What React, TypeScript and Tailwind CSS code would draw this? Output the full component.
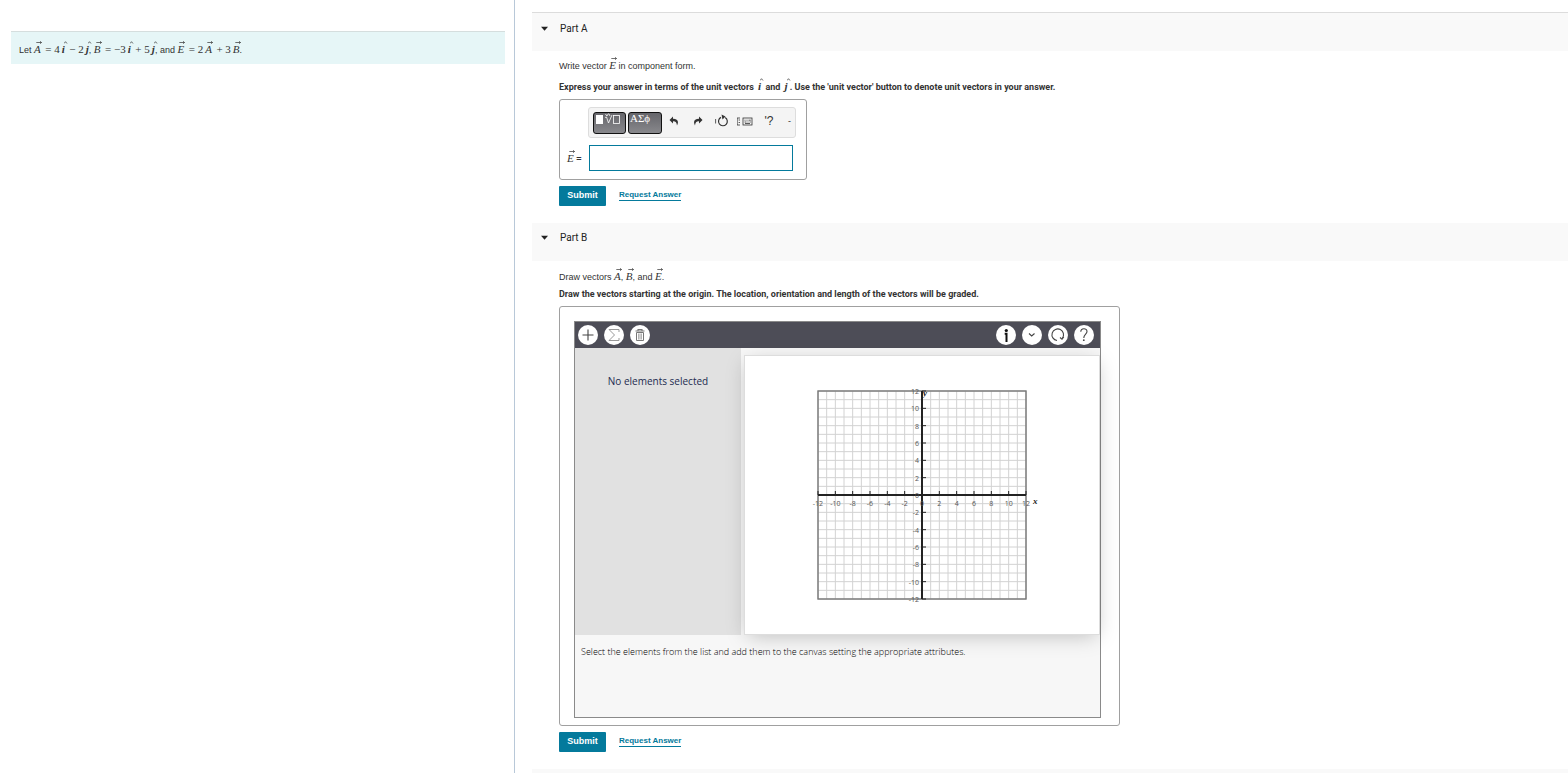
import type { ReactNode } from 'react';

// Math letter with an arrow or a hat over it
function Sym({
  children,
  hat = false,
  bold = false,
  spaced = false,
}: {
  children: ReactNode;
  hat?: boolean;
  bold?: boolean;
  spaced?: boolean;
}) {
  return (
    <span
      className={`relative inline-block font-['Liberation_Serif',serif] text-[11px] leading-[10px] italic ${
        bold ? 'font-bold' : 'font-normal'
      } ${spaced ? 'mx-[2px]' : ''}`}
    >
      {children}
      <svg
        viewBox="0 0 6 3"
        className="absolute -top-[3px] left-[2px] h-[3px] w-[6px]"
        fill="none"
        stroke="currentColor"
        strokeWidth="0.7"
        aria-hidden="true"
      >
        {hat ? <path d="M0 2.5 L1.5 0.7 L3 2.5" /> : <path d="M0.3 1.5 H5.5 M4 0.3 L5.5 1.5 L4 2.7" />}
      </svg>
    </span>
  );
}

function Num({ children }: { children: ReactNode }) {
  return <span className="mx-[2px] font-['Liberation_Serif',serif] text-[11px] leading-[10px]">{children}</span>;
}

function PartHeader({ title, first = false }: { title: string; first?: boolean }) {
  return (
    <button
      type="button"
      aria-expanded="true"
      className={`flex w-full items-start gap-3 bg-[#f9f9f9] pl-[9px] text-left font-[Roboto,sans-serif] text-[10px] leading-[14px] text-[#222] ${
        first ? 'h-[39px] border-t border-[#dcdcdc] pt-[9px]' : 'h-[38px] pt-2'
      }`}
    >
      <svg viewBox="0 0 8 14" className="h-[14px] w-[7px]" aria-hidden="true">
        <path d="M0 4.5 H8 L4 9 Z" fill="#222" />
      </svg>
      {title}
    </button>
  );
}

function SubmitRow() {
  return (
    <div className="mt-[6px] flex items-start gap-[13px] pb-[17px]">
      <button type="button" className="h-5 w-[47px] rounded-[1px] bg-[#047a9c] pb-[2px] text-[9px] font-bold text-white">
        Submit
      </button>
      <a href="#request" className="mt-[4px] border-b border-[#047a9c] text-[8px] leading-[10px] font-bold text-[#047a9c]">
        Request Answer
      </a>
    </div>
  );
}

function ToolButton({ label, children }: { label: string; children: ReactNode }) {
  return (
    <button type="button" aria-label={label} className="flex h-[18px] w-6 items-center justify-center text-[#333]">
      {children}
    </button>
  );
}

function RoundButton({ label, children }: { label: string; children: ReactNode }) {
  return (
    <button type="button" aria-label={label} className="h-5 w-5 rounded-full bg-white">
      <svg viewBox="0 0 20 20" className="h-5 w-5" fill="none" stroke="#444" strokeWidth="1.1">
        {children}
      </svg>
    </button>
  );
}

const UNIT = 208 / 24;
const CX = 177;
const CY = 139;
const steps = Array.from({ length: 25 }, (_, i) => i - 12);
const evens = steps.filter((n) => n % 2 === 0);

function Graph() {
  return (
    <svg viewBox="0 0 354 278" className="h-[278px] w-full" role="img" aria-label="Coordinate grid">
      <g stroke="#d2d2d2" strokeWidth="1">
        {steps.map((n) => (
          <g key={n}>
            <line x1={CX + n * UNIT} x2={CX + n * UNIT} y1={CY - 104} y2={CY + 104} />
            <line x1={CX - 104} x2={CX + 104} y1={CY + n * UNIT} y2={CY + n * UNIT} />
          </g>
        ))}
      </g>
      <rect x={CX - 104} y={CY - 104} width="208" height="208" fill="none" stroke="#777" strokeWidth="1.4" />
      <g stroke="#222" strokeWidth="2">
        <line x1={CX} x2={CX} y1={CY - 104} y2={CY + 104} />
        <line x1={CX - 104} x2={CX + 104} y1={CY} y2={CY} />
      </g>
      <g stroke="#222" strokeWidth="1">
        {evens.map((n) => (
          <g key={n}>
            <line x1={CX + n * UNIT} x2={CX + n * UNIT} y1={CY - 4} y2={CY} />
            <line x1={CX} x2={CX + 4} y1={CY + n * UNIT} y2={CY + n * UNIT} />
          </g>
        ))}
      </g>
      <g className="font-['Open_Sans',sans-serif] text-[7px]" fill="#555">
        {evens.map((n) => (
          <g key={n}>
            <text x={CX + n * UNIT} y={CY + 11} textAnchor="middle">
              {n}
            </text>
            <text x={CX - 3} y={CY - n * UNIT + 3} textAnchor="end">
              {n}
            </text>
          </g>
        ))}
      </g>
      <g className="font-['Liberation_Serif',serif] text-[9px] font-bold italic" fill="#222">
        <text x={CX + 1} y={CY - 99}>
          y
        </text>
        <text x={CX + 111} y={CY + 9}>
          x
        </text>
      </g>
    </svg>
  );
}

export default function App() {
  return (
    <div className="flex h-screen overflow-hidden bg-white font-['Liberation_Sans',sans-serif] text-[9px] leading-[14px] text-[#333]">
      {/* Problem statement */}
      <aside className="w-[515px] shrink-0 border-r border-[#b8c8d8] pt-[31px] pr-[9px] pl-[11px]">
        <div className="h-[33px] border-t border-[#d5dede] bg-[#e6f6f7] pt-[11px] pl-2">
          Let <Sym>A</Sym> <Num>= 4</Num>
          <Sym hat bold>i</Sym> <Num>− 2</Num>
          <Sym hat bold>j</Sym>, <Sym>B</Sym> <Num>= −3</Num>
          <Sym hat bold>i</Sym> <Num>+ 5</Num>
          <Sym hat bold>j</Sym>, and <Sym>E</Sym> <Num>= 2</Num>
          <Sym>A</Sym> <Num>+ 3</Num>
          <Sym>B</Sym>.
        </div>
      </aside>

      <main className="min-w-0 flex-1 pt-3 pl-[17px]">
        {/* Part A */}
        <section>
          <PartHeader title="Part A" first />
          <div className="pt-2 pl-[27px]">
            <p className="h-[14px]">
              Write vector <Sym>E</Sym> in component form.
            </p>
            <p className="mt-[7px] h-[14px] font-[Roboto,sans-serif] font-bold text-[#333]">
              Express your answer in terms of the unit vectors{' '}
              <Sym hat bold spaced>
                i
              </Sym>{' '}
              and{' '}
              <Sym hat bold spaced>
                j
              </Sym>
              . Use the 'unit vector' button to denote unit vectors in your answer.
            </p>

            <div className="mt-[5px] w-[248px] rounded-[3px] border border-[#a0a0a0] pt-[7px] pr-[10px] pb-2 pl-[7px]">
              <div className="ml-[21px] flex h-[31px] rounded-[3px] border border-[#ddd] bg-[#f4f4f4] pt-1 pl-1">
                <div className="flex gap-[2px]">
                  <button
                    type="button"
                    aria-label="Templates"
                    className="h-[22px] w-[33px] rounded-[3px] border border-[#111] bg-linear-to-b from-[#66666b] to-[#88888c]"
                  >
                    <svg viewBox="0 0 31 20" className="h-5 w-[31px]" fill="none" stroke="#fff" strokeWidth="0.8">
                      <rect x="2" y="2" width="7" height="9" fill="#fff" stroke="none" />
                      <path d="M11 4.5 L12.5 4 L14.5 10 L18 2 M11.5 1 L12.8 3 M14.5 0.5 L13 3 M15 1 L16 3" />
                      <rect x="19.5" y="2.5" width="6" height="8" />
                    </svg>
                  </button>
                  <button
                    type="button"
                    className="flex h-[22px] w-[34px] items-start rounded-[3px] border border-[#111] bg-linear-to-b from-[#66666b] to-[#88888c] pl-px font-['Liberation_Serif',serif] text-[11px] leading-[10px] text-white"
                  >
                    ΑΣϕ
                  </button>
                </div>
                <ToolButton label="Undo">
                  <svg viewBox="0 0 10 10" className="h-[10px] w-[10px]" fill="currentColor">
                    <path d="M4 0.5 L0.5 4 L4 7.5 V5.2 C6.5 5 7.8 6.5 8 9.5 C10.2 5.5 8.5 2.8 4 2.8 Z" />
                  </svg>
                </ToolButton>
                <ToolButton label="Redo">
                  <svg viewBox="0 0 10 10" className="h-[10px] w-[10px]" fill="currentColor">
                    <path d="M6 0.5 L9.5 4 L6 7.5 V5.2 C3.5 5 2.2 6.5 2 9.5 C-0.2 5.5 1.5 2.8 6 2.8 Z" />
                  </svg>
                </ToolButton>
                <ToolButton label="Reset">
                  <svg viewBox="0 0 14 14" className="h-[14px] w-[14px]" fill="none" stroke="currentColor" strokeWidth="1.2">
                    <path d="M0.6 5 V9.5" strokeWidth="0.8" />
                    <path d="M10.2 3.6 A4.4 4.4 0 1 1 6 3.4" />
                    <path d="M6.5 0.5 L10.5 2.4 L7.5 5.5 Z" fill="currentColor" stroke="none" />
                  </svg>
                </ToolButton>
                <ToolButton label="Keyboard">
                  <svg viewBox="3 0 18 10" className="h-[10px] w-[18px]" fill="none" stroke="currentColor" strokeWidth="0.8">
                    <path d="M2.8 2 H6 M2.8 9 H6 M3.2 2 V9 M4.6 4 H6 M4.6 6.5 H6" />
                    <rect x="9" y="2" width="9" height="7" />
                    <path d="M10.5 4.2 H11.5 M12.5 4.2 H13.5 M14.5 4.2 H16.8 M10.5 6 H12.5 M13.5 6 H14.5 M15.5 6 H16.8 M11 7.5 H16" />
                  </svg>
                </ToolButton>
                <button type="button" className="h-[18px] w-[22px] text-center text-[12px] leading-[18px] text-[#333]">
                  '?
                </button>
                <span className="ml-2 leading-[18px]">-</span>
              </div>
              <div className="mt-[7px] flex items-center">
                <label htmlFor="answer" className="w-[22px] pt-[2px] font-bold whitespace-nowrap">
                  <Sym>E</Sym> =
                </label>
                <input id="answer" type="text" className="h-[26px] w-[204px] border border-[#047a9c] bg-white px-1 outline-none" />
              </div>
            </div>
            <SubmitRow />
          </div>
        </section>

        {/* Part B */}
        <section>
          <PartHeader title="Part B" />
          <div className="pt-[9px] pl-[27px]">
            <p className="h-[14px]">
              Draw vectors <Sym>A</Sym>, <Sym>B</Sym>, and <Sym>E</Sym>.
            </p>
            <p className="mt-[3px] h-[14px] font-[Roboto,sans-serif] font-bold text-[#333]">
              Draw the vectors starting at the origin. The location, orientation and length of the vectors will be graded.
            </p>

            <div className="mt-[5px] w-[561px] rounded-[3px] border border-[#a0a0a0] pt-[14px] pr-[18px] pb-[7px] pl-[14px]">
              <div className="h-[397px] border border-[#8a8a8a] bg-[#f7f7f7]">
                <div className="flex h-[26px] items-center justify-between bg-[#4d4d57] pr-[6px] pl-[3px]">
                  <div className="flex gap-[6px]">
                    <RoundButton label="Add element">
                      <path d="M10 4.5 V15.5 M4.5 10 H15.5" />
                    </RoundButton>
                    <RoundButton label="Sum">
                      <path d="M15 7 V4.5 H5 L10.5 10 L5 15.5 H15 V13" stroke="#999" strokeWidth="1" />
                    </RoundButton>
                    <RoundButton label="Delete">
                      <path d="M5.5 6 H14.5 M8 5.8 V4.5 H12 V5.8" stroke="#777" strokeWidth="1.1" />
                      <path d="M6.5 7.5 V15.5 H13.5 V7.5 Z" stroke="#777" strokeWidth="1" />
                      <path d="M8.6 8.5 V14.5 M10 8.5 V14.5 M11.4 8.5 V14.5" stroke="#888" strokeWidth="0.7" />
                    </RoundButton>
                  </div>
                  <div className="flex gap-[6px]">
                    <RoundButton label="Information">
                      <circle cx="10.3" cy="5.5" r="1.6" fill="#111" stroke="none" />
                      <path d="M8.7 8.8 H10.5 V17" stroke="#111" strokeWidth="2" />
                    </RoundButton>
                    <RoundButton label="More options">
                      <path d="M7 8.5 L9.7 11 L12.5 8.5" />
                    </RoundButton>
                    <RoundButton label="Reset canvas">
                      <path d="M9 15.5 A5.8 5.8 0 1 1 14.4 13.2 M15.8 12 L14 14.2 L12 12.5" />
                    </RoundButton>
                    <RoundButton label="Help">
                      <path d="M6.8 6.8 C6.8 2.8 13 2.8 13 6.5 C13 9 9.8 9.3 9.8 13" />
                      <circle cx="9.8" cy="15.2" r="0.9" fill="#444" stroke="none" />
                    </RoundButton>
                  </div>
                </div>
                <div className="flex h-[287px] gap-[3px]">
                  <div className="w-[166px] shrink-0 bg-[#e1e1e1] pt-[26px] text-center font-['Open_Sans',sans-serif] text-[10px] text-[#1d2b50]">
                    No elements selected
                  </div>
                  <div className="relative mt-[7px] h-[280px] flex-1 border border-[#ddd] bg-white shadow-[0_4px_20px_-4px_rgba(0,0,0,0.25)]">
                    <Graph />
                  </div>
                </div>
                <p className="mt-[10px] pl-[6px] font-['Open_Sans',sans-serif] text-[9px] font-light text-black">
                  Select the elements from the list and add them to the canvas setting the appropriate attributes.
                </p>
              </div>
            </div>
            <SubmitRow />
          </div>
        </section>

        <div className="h-[38px] bg-[#f9f9f9]" />
      </main>
    </div>
  );
}
